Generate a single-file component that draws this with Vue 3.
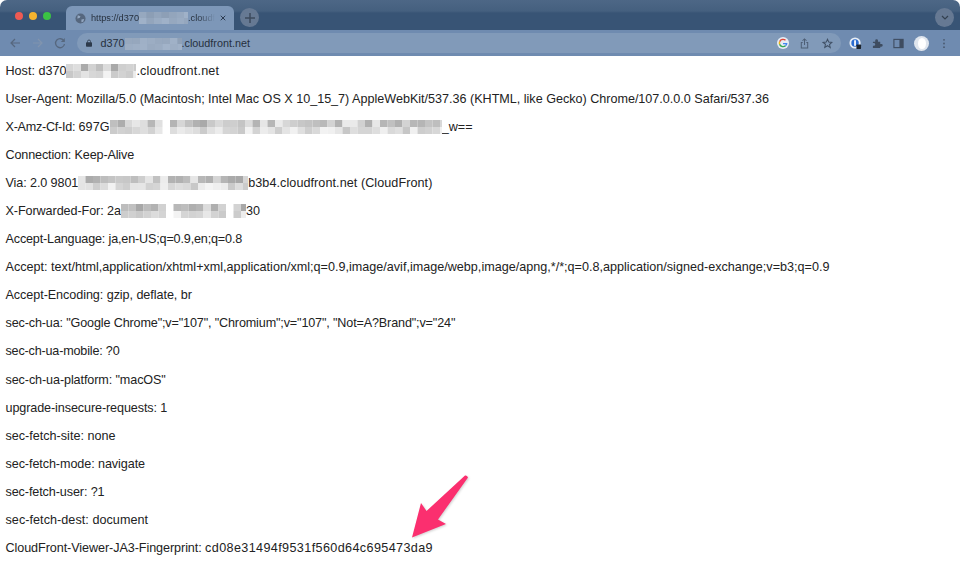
<script setup>
const seeded = (seed, n) => {
  let s = seed
  return Array.from({ length: n }, () => {
    s = (s * 9301 + 49297) % 233280
    return s / 233280
  })
}
const blurCells = (w, seed, h = 14, gaps = []) => {
  const cols = Math.ceil(w / 7.5)
  const vals = seeded(seed, cols * 2)
  const cells = []
  for (let r = 0; r < 2; r++) {
    for (let c = 0; c < cols; c++) {
      const x = c * 7.5
      if (gaps.some(([a, z]) => x >= a && x < z)) continue
      const v = Math.round((r === 0 ? 238 : 244) - vals[r * cols + c] * (r === 0 ? 72 : 46))
      cells.push({ x, y: r * (h / 2), w: Math.min(7.5, w - x), h: h / 2, fill: `rgb(${v},${v},${v})` })
    }
  }
  return cells
}
const t = (text, ls = 0) => ({ text, ls })
const b = (w, seed, gaps) => ({ w, cells: blurCells(w, seed, 14, gaps) })
const lines = [
  [t('Host: d370', 0), b(70, 3, [[8, 13], [63, 67]]), t('.cloudfront.net', 0.2)],
  [t('User-Agent: Mozilla/5.0 (Macintosh; Intel Mac OS X 10_15_7) AppleWebKit/537.36 (KHTML, like Gecko) Chrome/107.0.0.0 Safari/537.36', -0.01)],
  [t('X-Amz-Cf-Id: ', -0.25), t('697G', 0.1), b(332, 11, [[52, 59]]), t('_w==')],
  [t('Connection: Keep-Alive', -0.14)],
  [t('Via: 2.0 9801', -0.1), b(170, 23), t('b3b4.cloudfront.net (CloudFront)', 0.07)],
  [t('X-Forwarded-For: 2a', -0.08), b(125, 37, [[38, 50], [100, 107]]), t('30')],
  [t('Accept-Language: ja,en-US;q=0.9,en;q=0.8', -0.16)],
  [t('Accept: text/html,application/xhtml+xml,application/xml;q=0.9,image/avif,image/webp,image/apng,*/*;q=0.8,application/signed-exchange;v=b3;q=0.9', 0.007)],
  [t('Accept-Encoding: gzip, deflate, br', -0.06)],
  [t('sec-ch-ua: "Google Chrome";v="107", "Chromium";v="107", "Not=A?Brand";v="24"', -0.14)],
  [t('sec-ch-ua-mobile: ?0', -0.18)],
  [t('sec-ch-ua-platform: "macOS"', -0.1)],
  [t('upgrade-insecure-requests: 1', -0.1)],
  [t('sec-fetch-site: none')],
  [t('sec-fetch-mode: navigate', -0.08)],
  [t('sec-fetch-user: ?1', -0.1)],
  [t('sec-fetch-dest: document', 0.05)],
  [t('CloudFront-Viewer-JA3-Fingerprint: ', -0.07), t('cd08e31494f9531f560d64c695473da9', 0.38)],
]
const tabBlur = blurCells(49, 5, 12)
const urlBlur = blurCells(57, 7, 12)
</script>

<template>
  <div class="page">
    <header class="chrome">
      <div class="tabstrip">
        <div class="lights">
          <i class="light red"></i><i class="light yellow"></i><i class="light green"></i>
        </div>
        <div class="tab">
          <svg class="globe" viewBox="0 0 12 12"><circle cx="6" cy="6" r="5.5" fill="#56677e"/><path d="M3 2.500l3 1-1 2-2.500.5zM7 7l3-.5-1 3-2 .5z" fill="#93a7c1"/></svg>
          <span class="tab-title">https://d370<svg class="inline-blur" width="49" height="12"><rect v-for="(c, i) in tabBlur" :key="i" :x="c.x" :y="c.y" :width="c.w" :height="c.h" :fill="c.fill" opacity=".3"/></svg>.cloudfront.net</span>
          <svg class="close" viewBox="0 0 8 8"><path d="M1 1l6 6M7 1L1 7" stroke="#2b3a4e" stroke-width="1.3"/></svg>
        </div>
        <div class="newtab">
          <svg viewBox="0 0 10 10"><path d="M5 0v10M0 5h10" stroke="#3d4a5c" stroke-width="1.5"/></svg>
        </div>
        <div class="spacer"></div>
        <div class="tabmenu">
          <svg viewBox="0 0 8 5"><path d="M1 1l3 3 3-3" fill="none" stroke="#33404f" stroke-width="1.2"/></svg>
        </div>
      </div>
      <div class="toolbar">
        <svg class="nav" viewBox="0 0 12 12"><path d="M11 6H2M6 2L2 6l4 4" fill="none" stroke="#56677e" stroke-width="1.2"/></svg>
        <svg class="nav" viewBox="0 0 12 12"><path d="M1 6h9M6 2l4 4-4 4" fill="none" stroke="#8094ae" stroke-width="1.2"/></svg>
        <svg class="nav" viewBox="0 0 12 12"><path d="M10 4a4.500 4.500 0 1 0 .5 3" fill="none" stroke="#56677e" stroke-width="1.3"/><path d="M10.800 1v4h-4z" fill="#56677e"/></svg>
        <div class="omnibox">
          <svg class="lock" viewBox="0 0 8 10"><rect y="4" width="8" height="6" rx="1" fill="#2d3a4b"/><path d="M2 4.500V3a2 2 0 0 1 4 0v1.500" fill="none" stroke="#2d3a4b" stroke-width="1.1"/></svg>
          <span class="url">d370<svg class="inline-blur" width="57" height="12"><rect v-for="(c, i) in urlBlur" :key="i" :x="c.x" :y="c.y" :width="c.w" :height="c.h" :fill="c.fill" opacity=".3"/></svg>.cloudfront.net</span>
          <div class="spacer"></div>
          <svg class="omni-g" viewBox="0 0 12 12">
            <circle cx="6" cy="6" r="6" fill="#e6ecf3"/>
            <path d="M6 3a3 3 0 0 1 2 .8L9 2.800A4.500 4.500 0 0 0 2 4.300l1.200 1A3 3 0 0 1 6 3z" fill="#e0483a"/>
            <path d="M2 4.300a4.500 4.500 0 0 0 0 3.400l1.200-1a3 3 0 0 1 0-1.400z" fill="#f2b90f"/>
            <path d="M2 7.700a4.500 4.500 0 0 0 7 1.500L8 8.300a3 3 0 0 1-4.800-1.600z" fill="#36a853"/>
            <path d="M10.500 6H6v1.300h2.800A2 2 0 0 1 8 8.300l1 .9A4.500 4.500 0 0 0 10.500 6z" fill="#4286ef"/>
          </svg>
          <svg class="omni-share" viewBox="0 0 12 12"><path d="M6 7.500V1M3.800 3L6 1l2.200 2M4 5H2.500v6h7V5H8" fill="none" stroke="#4d5e75" stroke-width="1.1"/></svg>
          <svg class="omni-star" viewBox="0 0 12 12"><path d="M6 1.300l1.400 3.200 3.400.3-2.600 2.300.8 3.400L6 8.400l-3 1.800.8-3.400L1.200 4.800l3.400-.3z" fill="none" stroke="#3f4f64" stroke-width="1.1"/></svg>
        </div>
        <div class="ext-icons">
          <div class="ext-badge">
            <svg viewBox="0 0 14 14"><circle cx="6.500" cy="6.500" r="6" fill="#e8eef5"/><circle cx="6.500" cy="6.500" r="4" fill="#2b6cd0"/><rect x="5.500" y="3.500" width="2" height="6" fill="#f4f7fb"/><rect x="8" y="8" width="5" height="5" rx="1" fill="#1e2630"/></svg>
          </div>
          <svg class="ext" viewBox="0 0 12 12"><path d="M1 4h2.500V2.800a1.500 1.500 0 0 1 3 0V4H9v2.500h1.200a1.500 1.500 0 0 1 0 3H9V11H1V8.500h1a1.500 1.500 0 0 0 0-3H1z" fill="#3e4c60"/></svg>
          <svg class="ext" viewBox="0 0 12 12"><rect x="1" y="1.500" width="10" height="9" fill="none" stroke="#3e4c60" stroke-width="1.2"/><rect x="7" y="1.500" width="4" height="9" fill="#3e4c60"/></svg>
          <div class="avatar"><span></span></div>
          <svg class="dots" viewBox="0 0 4 12"><circle cx="2" cy="2" r="1" fill="#4a5a70"/><circle cx="2" cy="6" r="1" fill="#4a5a70"/><circle cx="2" cy="10" r="1" fill="#4a5a70"/></svg>
        </div>
      </div>
    </header>
    <main class="headers">
      <p v-for="(line, i) in lines" :key="i" class="line">
        <template v-for="(seg, j) in line" :key="j">
          <span v-if="seg.text" class="seg" :style="{ letterSpacing: seg.ls + 'px' }">{{ seg.text }}</span>
          <svg v-else class="inline-blur" :width="seg.w" height="14">
            <rect v-for="(c, k) in seg.cells" :key="k" :x="c.x" :y="c.y" :width="c.w" :height="c.h" :fill="c.fill"/>
          </svg>
        </template>
      </p>
    </main>
    <svg class="arrow" viewBox="0 0 960 580">
      <path d="M465 475.500Q467 475 468 477.500L438 519.500L446 524L412 537.500L421 503L426.500 511Z" fill="#fb2f6f"/>
    </svg>
  </div>
</template>

<style scoped>
.page {
  position: relative;
  width: 960px;
  height: 580px;
  overflow: hidden;
  background: #fff;
  font-family: "Liberation Sans", Arial, sans-serif;
  color: #222;
}
.chrome { height: 56px; display: flex; flex-direction: column; border-radius: 7px 7px 0 0; overflow: hidden; }
.tabstrip {
  height: 30px;
  display: flex;
  align-items: flex-end;
  background: linear-gradient(#4d6786 0, #45607f 11px, #385475 13px, #385475 100%);
  padding-right: 6px;
}
.lights { display: flex; gap: 6px; align-self: flex-start; margin: 12px 0 0 15px; width: 51px; }
.light { width: 8px; height: 8px; border-radius: 50%; }
.red { background: #ee5a53; }
.yellow { background: #f5b32f; }
.green { background: #3bc244; }
.tab {
  width: 168px;
  height: 24px;
  background: #7d97b8;
  border-radius: 6px 6px 0 0;
  display: flex;
  align-items: center;
  padding: 0 8px 0 9px;
  box-sizing: border-box;
  gap: 5px;
}
.globe { width: 11px; height: 11px; flex: none; }
.tab-title {
  flex: 1;
  min-width: 0;
  font-size: 9.2px;
  white-space: nowrap;
  overflow: hidden;
  color: #26303d;
  -webkit-mask-image: linear-gradient(90deg, #000 86%, transparent);
  mask-image: linear-gradient(90deg, #000 86%, transparent);
}
.close { width: 6px; height: 6px; flex: none; }
.newtab {
  width: 19px;
  height: 19px;
  border-radius: 50%;
  background: #667993;
  display: flex;
  align-items: center;
  justify-content: center;
  margin: 0 0 3px 6px;
}
.newtab svg { width: 10px; height: 10px; }
.spacer { flex: 1; }
.tabmenu {
  width: 19px;
  height: 19px;
  border-radius: 50%;
  background: #667993;
  display: flex;
  align-items: center;
  justify-content: center;
  margin-bottom: 3px;
}
.tabmenu svg { width: 8px; height: 5px; }
.toolbar {
  height: 26px;
  background: #6f8bb0;
  display: flex;
  align-items: center;
  padding: 0 0 0 9px;
  gap: 10.5px;
}
.nav { width: 12px; height: 12px; flex: none; }
.omnibox {
  width: 764px;
  height: 20px;
  border-radius: 10px;
  background: #819ab9;
  display: flex;
  align-items: center;
  padding: 0 7.5px 0 9px;
  box-sizing: border-box;
}
.lock { width: 6px; height: 8px; margin-right: 9px; }
.url { font-size: 10.8px; color: #26303d; white-space: nowrap; }
.omni-g { width: 12px; height: 12px; margin-right: 10.5px; }
.omni-share { width: 11px; height: 11px; margin-right: 12px; }
.omni-star { width: 11px; height: 11px; }
.ext-icons { display: flex; align-items: center; gap: 10px; margin-left: -2px; }
.ext-badge { width: 13px; height: 13px; }
.ext-badge svg { width: 13px; height: 13px; display: block; }
.ext { width: 11px; height: 11px; }
.avatar {
  width: 15px;
  height: 15px;
  border-radius: 50%;
  background: #dfe5ed;
  display: flex;
  align-items: center;
  justify-content: center;
}
.avatar span { width: 8px; height: 11px; border-radius: 50%; background: #fff; }
.dots { width: 4px; height: 11px; margin-left: 3px; }
.headers { padding: 6px 0 0 5.5px; }
.line {
  margin: 0;
  height: 28.06px;
  line-height: 18px;
  font-size: 12.6px;
  white-space: pre;
}
.inline-blur { display: inline-block; vertical-align: -3px; filter: blur(.6px); }
.arrow { position: absolute; inset: 0; width: 960px; height: 580px; pointer-events: none; filter: drop-shadow(1px 1px 1px rgba(0,0,0,.18)); }
</style>
